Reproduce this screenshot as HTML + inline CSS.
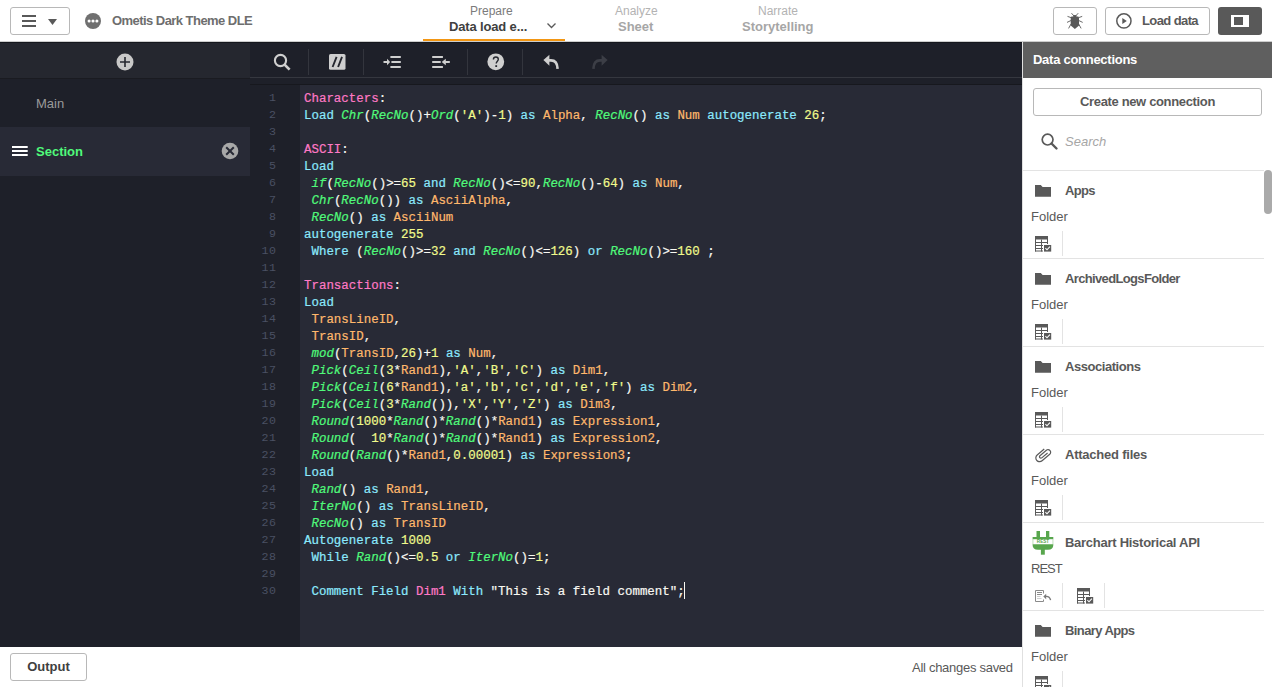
<!DOCTYPE html>
<html><head><meta charset="utf-8">
<style>
*{box-sizing:border-box;margin:0;padding:0}
html,body{width:1272px;height:687px;overflow:hidden;background:#fff;font-family:"Liberation Sans",sans-serif}
.a{position:absolute}
svg{position:absolute;overflow:visible}
#hdr{left:0;top:0;width:1272px;height:42px;background:#fff;border-bottom:1px solid #cdcdcd}
.btn{position:absolute;border:1px solid #b8b8b8;border-radius:3px;background:#fff}
.t{position:absolute;white-space:nowrap;line-height:1}
#left{left:0;top:42px;width:250px;height:605px;background:#1e2029}
#lefthdr{left:0;top:42px;width:250px;height:37px;background:#25272f;border-bottom:1px solid #1a1b21}
#secrow{left:0;top:127px;width:250px;height:49px;background:#282a36}
#toolbar{left:250px;top:42px;width:772px;height:36px;background:#1e2029;border-bottom:1px solid #35373f}
.sep{position:absolute;top:49px;width:1px;height:26px;background:#33353d}
#gap{left:250px;top:78px;width:772px;height:7px;background:#1e2029;border-bottom:1px solid #17181e}
#gutter{left:250px;top:85px;width:50px;height:562px;background:#1e2029}
#code{left:300px;top:85px;width:722px;height:562px;background:#282a36}
#lns{position:absolute;left:250px;top:89px;width:26.5px;text-align:right;font-family:"Liberation Mono",monospace;font-size:11.6px;letter-spacing:0.5px;line-height:17px;color:#4a5063;white-space:pre}
pre{position:absolute;left:304px;top:91px;font-family:"Liberation Mono",monospace;font-size:12.45px;line-height:17px;color:#f8f8f2;-webkit-text-stroke:0.2px currentColor}
.k{color:#8be9fd}.f{color:#50fa7b;font-style:italic}.v{color:#ffb86c}.n{color:#f1fa8c}.l{color:#ff79c6}.s{color:#f1fa8c}
#caret{left:684px;top:582px;width:1px;height:17px;background:#f8f8f2}
#right{left:1022px;top:42px;width:250px;height:645px;background:#fff;border-left:1px solid #e0e0e0;overflow:hidden}
#rhdr{left:1023px;top:42px;width:249px;height:36px;background:#5f5f5f}
#foot{left:0;top:647px;width:1022px;height:40px;background:#fff}
.item{position:absolute;left:1023px;width:241px;height:88px;border-bottom:1px solid #e3e3e3}
.nm{position:absolute;left:42px;top:12px;font-size:13px;font-weight:bold;color:#595959;white-space:nowrap}
.ty{position:absolute;left:8px;top:38px;font-size:13px;color:#595959}
.vs{position:absolute;top:60px;width:1px;height:25px;background:#e3e3e3}
</style></head><body>
<div id="hdr" class="a"></div>
<div class="btn" style="left:10px;top:7px;width:60px;height:28px"></div>
<svg style="left:22px;top:15px" width="14" height="12"><rect x="0" y="0" width="14" height="2" fill="#595959"/><rect x="0" y="5" width="14" height="2" fill="#595959"/><rect x="0" y="10" width="14" height="2" fill="#595959"/></svg>
<svg style="left:48px;top:19px" width="9" height="6"><path d="M0 0H9L4.5 6Z" fill="#595959"/></svg>
<svg style="left:85px;top:13px" width="16" height="16"><circle cx="8" cy="8" r="8" fill="#707070"/><circle cx="4.1" cy="8" r="1.55" fill="#fff"/><circle cx="8" cy="8" r="1.55" fill="#fff"/><circle cx="11.9" cy="8" r="1.55" fill="#fff"/></svg>
<div class="t" style="left:112px;top:14px;font-size:13px;font-weight:bold;color:#6e6e6e;letter-spacing:-0.55px">Ometis Dark Theme DLE</div>

<div class="t" style="left:470px;top:5px;font-size:12px;color:#7b7b7b">Prepare</div>
<div class="t" style="left:449px;top:20px;font-size:13px;font-weight:bold;color:#404040;letter-spacing:-0.15px">Data load e...</div>
<svg style="left:547px;top:23px" width="9" height="5"><path d="M0.5 0.5L4.5 4.5L8.5 0.5" stroke="#595959" stroke-width="1.3" fill="none"/></svg>
<div class="a" style="left:423px;top:39px;width:142px;height:2px;background:#f29613"></div>
<div class="t" style="left:615px;top:5px;font-size:12px;color:#b3b3b3">Analyze</div>
<div class="t" style="left:618px;top:20px;font-size:13px;font-weight:bold;color:#a6a6a6">Sheet</div>
<div class="t" style="left:758px;top:5px;font-size:12px;color:#b3b3b3">Narrate</div>
<div class="t" style="left:742px;top:20px;font-size:13px;font-weight:bold;color:#a6a6a6">Storytelling</div>

<div class="btn" style="left:1053px;top:7px;width:44px;height:28px"></div>
<svg style="left:1062px;top:10px" width="26" height="22"><path d="M8.7 7.6Q8.7 6.6 10 6.6H15.7Q17 6.6 17 7.6V15.4L12.85 19L8.7 15.4Z" fill="#595959"/><ellipse cx="12.85" cy="6.2" rx="1.7" ry="1.1" fill="#595959"/><path d="M12 6L9.5 3.2M13.7 6L16.2 3.2M9 7.6L5.5 6.4M16.7 7.6L20.2 6.4M9 10.5L5 12.4M16.7 10.5L20.7 12.4M9 14L6.6 18.4M16.7 14L19.1 18.4" stroke="#595959" stroke-width="0.9" fill="none"/></svg>
<div class="btn" style="left:1105px;top:7px;width:105px;height:28px"></div>
<svg style="left:1116px;top:13px" width="16" height="16"><circle cx="7.9" cy="7.9" r="7.1" stroke="#595959" stroke-width="1.5" fill="none"/><path d="M6.3 5V11L10.8 8Z" fill="#595959"/></svg>
<div class="t" style="left:1142px;top:14px;font-size:13px;font-weight:bold;color:#595959;letter-spacing:-0.6px">Load data</div>
<div class="a" style="left:1218px;top:7px;width:44px;height:28px;background:#595959;border-radius:3px"></div>
<div class="a" style="left:1231px;top:15px;width:18px;height:12px;background:#fff"></div><div class="a" style="left:1234px;top:17px;width:9px;height:8px;background:#595959"></div>

<div id="left" class="a"></div>
<div id="lefthdr" class="a"></div>
<svg style="left:116px;top:53px" width="18" height="18"><circle cx="9" cy="9" r="8.5" fill="#c8c8c8"/><path d="M9 4V14M4 9H14" stroke="#25272f" stroke-width="1.6"/></svg>
<div class="t" style="left:36px;top:97px;font-size:13px;color:#9a9a9a">Main</div>
<div id="secrow" class="a"></div>
<svg style="left:12px;top:146px" width="16" height="10"><rect y="0" width="15.7" height="2" fill="#fff"/><rect y="4" width="15.7" height="2" fill="#fff"/><rect y="8" width="15.7" height="2" fill="#fff"/></svg>
<div class="t" style="left:36px;top:145px;font-size:13px;font-weight:bold;color:#50fa7b">Section</div>
<svg style="left:221px;top:142px" width="18" height="18"><circle cx="9" cy="9" r="8.3" fill="#a8a8a8"/><path d="M5.2 5.2L12.8 12.8M12.8 5.2L5.2 12.8" stroke="#282a36" stroke-width="2"/></svg>

<div id="toolbar" class="a"></div>
<svg style="left:273px;top:53px" width="18" height="18"><circle cx="7.5" cy="7.5" r="5.6" stroke="#cfcfcf" stroke-width="2.1" fill="none"/><path d="M11.6 11.6L16.6 16.6" stroke="#cfcfcf" stroke-width="2.7"/></svg>
<div class="sep" style="left:308px"></div>
<svg style="left:329px;top:54px" width="17" height="16"><rect x="0" y="0" width="16.5" height="15.8" rx="1.6" fill="#cfcfcf"/><path d="M7.6 2.9L3.6 13M13 2.9L9.1 13" stroke="#25272f" stroke-width="1.9"/></svg>
<div class="sep" style="left:363px"></div>
<svg style="left:383px;top:55px" width="18" height="14"><rect x="7.4" y="1" width="10.4" height="2" fill="#cfcfcf"/><rect x="8.4" y="6" width="9.4" height="2" fill="#cfcfcf"/><rect x="7.4" y="11" width="10.4" height="2" fill="#cfcfcf"/><rect x="0.5" y="6" width="4.5" height="2" fill="#cfcfcf"/><path d="M4 3.8L7.2 7L4 10.2Z" fill="#cfcfcf"/></svg>
<svg style="left:432px;top:55px" width="18" height="14"><rect x="0.2" y="1" width="10.7" height="2" fill="#cfcfcf"/><rect x="0.2" y="6" width="8.5" height="2" fill="#cfcfcf"/><rect x="0.2" y="11" width="10.7" height="2" fill="#cfcfcf"/><rect x="13" y="6" width="4.8" height="2" fill="#cfcfcf"/><path d="M13.8 3.8L9.7 7L13.8 10.2Z" fill="#cfcfcf"/></svg>
<div class="sep" style="left:467px"></div>
<svg style="left:487px;top:53px" width="18" height="18"><circle cx="8.8" cy="8.8" r="8.4" fill="#cfcfcf"/><path d="M6.4 6.6C6.4 4.8 7.5 4 8.9 4C10.4 4 11.3 5 11.3 6.3C11.3 8.1 9.2 8.3 9.2 10.6" stroke="#25272f" stroke-width="1.4" fill="none"/><rect x="8.3" y="12.2" width="1.8" height="1.8" fill="#25272f"/></svg>
<div class="sep" style="left:522px"></div>
<svg style="left:543px;top:54px" width="17" height="16"><path d="M0.4 6L6.4 0.7V11.8Z" fill="#cfcfcf"/><path d="M6 6.4H8C12 6.4 14.4 9 14.6 14.9" stroke="#cfcfcf" stroke-width="2.6" fill="none"/></svg>
<svg style="left:592px;top:54px" width="17" height="16"><path d="M15.6 6L9.6 0.7V11.8Z" fill="#3c3e46"/><path d="M10 6.4H8C4 6.4 1.6 9 1.4 14.9" stroke="#3c3e46" stroke-width="2.6" fill="none"/></svg>

<div id="gap" class="a"></div>
<div class="a" style="left:0;top:42px;width:1022px;height:1px;background:#15171d"></div>
<div id="gutter" class="a"></div>
<div id="code" class="a"></div>
<div id="lns">1
2
3
4
5
6
7
8
9
10
11
12
13
14
15
16
17
18
19
20
21
22
23
24
25
26
27
28
29
30</div>
<pre id="src"><span class="l">Characters</span>:
<span class="k">Load</span> <span class="f">Chr</span>(<span class="f">RecNo</span>()+<span class="f">Ord</span>(<span class="s">'A'</span>)-<span class="n">1</span>) <span class="k">as</span> <span class="v">Alpha</span>, <span class="f">RecNo</span>() <span class="k">as</span> <span class="v">Num</span> <span class="k">autogenerate</span> <span class="n">26</span>;

<span class="l">ASCII</span>:
<span class="k">Load</span>
 <span class="f">if</span>(<span class="f">RecNo</span>()&gt;=<span class="n">65</span> <span class="k">and</span> <span class="f">RecNo</span>()&lt;=<span class="n">90</span>,<span class="f">RecNo</span>()-<span class="n">64</span>) <span class="k">as</span> <span class="v">Num</span>,
 <span class="f">Chr</span>(<span class="f">RecNo</span>()) <span class="k">as</span> <span class="v">AsciiAlpha</span>,
 <span class="f">RecNo</span>() <span class="k">as</span> <span class="v">AsciiNum</span>
<span class="k">autogenerate</span> <span class="n">255</span>
 <span class="k">Where</span> (<span class="f">RecNo</span>()&gt;=<span class="n">32</span> <span class="k">and</span> <span class="f">RecNo</span>()&lt;=<span class="n">126</span>) <span class="k">or</span> <span class="f">RecNo</span>()&gt;=<span class="n">160</span> ;

<span class="l">Transactions</span>:
<span class="k">Load</span>
 <span class="v">TransLineID</span>,
 <span class="v">TransID</span>,
 <span class="f">mod</span>(<span class="v">TransID</span>,<span class="n">26</span>)+<span class="n">1</span> <span class="k">as</span> <span class="v">Num</span>,
 <span class="f">Pick</span>(<span class="f">Ceil</span>(<span class="n">3</span>*<span class="v">Rand1</span>),<span class="s">'A'</span>,<span class="s">'B'</span>,<span class="s">'C'</span>) <span class="k">as</span> <span class="v">Dim1</span>,
 <span class="f">Pick</span>(<span class="f">Ceil</span>(<span class="n">6</span>*<span class="v">Rand1</span>),<span class="s">'a'</span>,<span class="s">'b'</span>,<span class="s">'c'</span>,<span class="s">'d'</span>,<span class="s">'e'</span>,<span class="s">'f'</span>) <span class="k">as</span> <span class="v">Dim2</span>,
 <span class="f">Pick</span>(<span class="f">Ceil</span>(<span class="n">3</span>*<span class="f">Rand</span>()),<span class="s">'X'</span>,<span class="s">'Y'</span>,<span class="s">'Z'</span>) <span class="k">as</span> <span class="v">Dim3</span>,
 <span class="f">Round</span>(<span class="n">1000</span>*<span class="f">Rand</span>()*<span class="f">Rand</span>()*<span class="v">Rand1</span>) <span class="k">as</span> <span class="v">Expression1</span>,
 <span class="f">Round</span>(  <span class="n">10</span>*<span class="f">Rand</span>()*<span class="f">Rand</span>()*<span class="v">Rand1</span>) <span class="k">as</span> <span class="v">Expression2</span>,
 <span class="f">Round</span>(<span class="f">Rand</span>()*<span class="v">Rand1</span>,<span class="n">0.00001</span>) <span class="k">as</span> <span class="v">Expression3</span>;
<span class="k">Load</span>
 <span class="f">Rand</span>() <span class="k">as</span> <span class="v">Rand1</span>,
 <span class="f">IterNo</span>() <span class="k">as</span> <span class="v">TransLineID</span>,
 <span class="f">RecNo</span>() <span class="k">as</span> <span class="v">TransID</span>
<span class="k">Autogenerate</span> <span class="n">1000</span>
 <span class="k">While</span> <span class="f">Rand</span>()&lt;=<span class="n">0.5</span> <span class="k">or</span> <span class="f">IterNo</span>()=<span class="n">1</span>;

 <span class="k">Comment Field</span> <span class="l">Dim1</span> <span class="k">With</span> "This is a field comment";</pre>
<div id="caret" class="a"></div>

<div id="right" class="a"></div>
<div id="rhdr" class="a"></div>
<div class="t" style="left:1033px;top:53px;font-size:13px;font-weight:bold;color:#fff;letter-spacing:-0.27px">Data connections</div>
<div class="btn" style="left:1033px;top:88px;width:229px;height:28px"></div>
<div class="t" style="left:1033px;top:95px;width:229px;text-align:center;font-size:13px;font-weight:bold;color:#595959;letter-spacing:-0.35px">Create new connection</div>
<svg style="left:1041px;top:133px" width="17" height="17"><circle cx="6.6" cy="6.6" r="5.4" stroke="#595959" stroke-width="1.7" fill="none"/><path d="M10.5 10.5L15.5 15.5" stroke="#595959" stroke-width="2.4" stroke-linecap="round"/></svg>
<div class="t" style="left:1065px;top:135px;font-size:13px;font-style:italic;color:#a6a6a6">Search</div>
<div class="a" style="left:1023px;top:170px;width:241px;height:1px;background:#e3e3e3"></div>
<div class="a" style="left:1264px;top:170px;width:8px;height:44px;border-radius:4px;background:#aaaaaa"></div>
<div class="item" style="top:171px"><svg style="left:12px;top:14px" width="16" height="12"><path d="M0 0H5.8L7.6 2H16V11.8H0Z" fill="#595959"/></svg><div class="nm" style="letter-spacing:-0.67px">Apps</div><div class="ty">Folder</div><svg style="left:12px;top:65px" width="17" height="16"><rect x="0" y="0" width="13" height="3.5" fill="#595959"/><path d="M0.5 0V15.5M6.5 3.5V15.5M12.5 0V8M0 6.5H12.5M0 9.5H8M0 12.5H8M0 15H8" stroke="#595959" stroke-width="1" fill="none"/><rect x="9" y="9" width="7.2" height="6.6" fill="#595959"/><path d="M10.4 12.2L12 13.8L14.9 10.7" stroke="#fff" stroke-width="1.1" fill="none"/></svg><div class="vs" style="left:39px"></div></div>
<div class="item" style="top:259px"><svg style="left:12px;top:14px" width="16" height="12"><path d="M0 0H5.8L7.6 2H16V11.8H0Z" fill="#595959"/></svg><div class="nm" style="letter-spacing:-0.65px">ArchivedLogsFolder</div><div class="ty">Folder</div><svg style="left:12px;top:65px" width="17" height="16"><rect x="0" y="0" width="13" height="3.5" fill="#595959"/><path d="M0.5 0V15.5M6.5 3.5V15.5M12.5 0V8M0 6.5H12.5M0 9.5H8M0 12.5H8M0 15H8" stroke="#595959" stroke-width="1" fill="none"/><rect x="9" y="9" width="7.2" height="6.6" fill="#595959"/><path d="M10.4 12.2L12 13.8L14.9 10.7" stroke="#fff" stroke-width="1.1" fill="none"/></svg><div class="vs" style="left:39px"></div></div>
<div class="item" style="top:347px"><svg style="left:12px;top:14px" width="16" height="12"><path d="M0 0H5.8L7.6 2H16V11.8H0Z" fill="#595959"/></svg><div class="nm" style="letter-spacing:-0.45px">Associations</div><div class="ty">Folder</div><svg style="left:12px;top:65px" width="17" height="16"><rect x="0" y="0" width="13" height="3.5" fill="#595959"/><path d="M0.5 0V15.5M6.5 3.5V15.5M12.5 0V8M0 6.5H12.5M0 9.5H8M0 12.5H8M0 15H8" stroke="#595959" stroke-width="1" fill="none"/><rect x="9" y="9" width="7.2" height="6.6" fill="#595959"/><path d="M10.4 12.2L12 13.8L14.9 10.7" stroke="#fff" stroke-width="1.1" fill="none"/></svg><div class="vs" style="left:39px"></div></div>
<div class="item" style="top:435px"><svg style="left:8px;top:8px" width="24" height="24" viewBox="0 0 24 24"><g transform="translate(12 12) rotate(50) scale(-0.8 0.8) translate(-12.5 -12)"><path d="M16.5 6v11.5c0 2.21-1.79 4-4 4s-4-1.79-4-4V5c0-1.38 1.12-2.5 2.5-2.5s2.5 1.12 2.5 2.5v10.5c0 .55-.45 1-1 1s-1-.45-1-1V6H10v9.5c0 1.38 1.12 2.5 2.5 2.5s2.5-1.12 2.5-2.5V5c0-2.21-1.79-4-4-4S7 2.79 7 5v12.5c0 3.04 2.46 5.5 5.5 5.5s5.5-2.46 5.5-5.5V6h-1.5z" fill="#595959"/></g></svg><div class="nm" style="letter-spacing:-0.23px">Attached files</div><div class="ty">Folder</div><svg style="left:12px;top:65px" width="17" height="16"><rect x="0" y="0" width="13" height="3.5" fill="#595959"/><path d="M0.5 0V15.5M6.5 3.5V15.5M12.5 0V8M0 6.5H12.5M0 9.5H8M0 12.5H8M0 15H8" stroke="#595959" stroke-width="1" fill="none"/><rect x="9" y="9" width="7.2" height="6.6" fill="#595959"/><path d="M10.4 12.2L12 13.8L14.9 10.7" stroke="#fff" stroke-width="1.1" fill="none"/></svg><div class="vs" style="left:39px"></div></div>
<div class="item" style="top:523px"><svg style="left:9px;top:8px" width="22" height="24"><rect x="4.5" y="0" width="3.5" height="6.5" fill="#58a64d"/><rect x="14" y="0" width="3.3" height="6.5" fill="#58a64d"/><rect x="0.6" y="6" width="20.7" height="2.2" fill="#58a64d"/><rect x="0.6" y="8" width="0.7" height="5.3" fill="#a9d3a4"/><rect x="20.6" y="8" width="0.7" height="5.3" fill="#a9d3a4"/><path d="M0.6 13.2H21.3V14Q21.3 18.7 16 18.7H6Q0.6 18.7 0.6 14Z" fill="#58a64d"/><rect x="8.9" y="18" width="3.9" height="5.7" fill="#58a64d"/><text x="11" y="12.3" font-size="4.6" font-weight="bold" text-anchor="middle" fill="#58a64d" font-family="Liberation Sans">REST</text></svg><div class="nm" style="letter-spacing:-0.27px">Barchart Historical API</div><div class="ty" style="letter-spacing:-1px">REST</div><svg style="left:12px;top:67px" width="17" height="13"><path d="M0.5 0.5H8.5V3.5M0.5 0.5V11.5H8.5V9.5" stroke="#8a8a8a" stroke-width="1" fill="none"/><path d="M2 2.5H7M2 4.5H7" stroke="#8a8a8a" stroke-width="1"/><path d="M2 6.5H5.5M2 8.5H6.5" stroke="#cfcfcf" stroke-width="1"/><path d="M8.3 6.5L11.2 3.8V9.2Z" fill="#7a7a7a"/><path d="M10.5 6.4C13 6.1 15 7.6 15.6 10.2" stroke="#7a7a7a" stroke-width="1.4" fill="none"/></svg><div class="vs" style="left:39px"></div><svg style="left:54px;top:65px" width="17" height="16"><rect x="0" y="0" width="13" height="3.5" fill="#595959"/><path d="M0.5 0V15.5M6.5 3.5V15.5M12.5 0V8M0 6.5H12.5M0 9.5H8M0 12.5H8M0 15H8" stroke="#595959" stroke-width="1" fill="none"/><rect x="9" y="9" width="7.2" height="6.6" fill="#595959"/><path d="M10.4 12.2L12 13.8L14.9 10.7" stroke="#fff" stroke-width="1.1" fill="none"/></svg><div class="vs" style="left:81px"></div></div>
<div class="item" style="top:611px"><svg style="left:12px;top:14px" width="16" height="12"><path d="M0 0H5.8L7.6 2H16V11.8H0Z" fill="#595959"/></svg><div class="nm" style="letter-spacing:-0.6px">Binary Apps</div><div class="ty">Folder</div><svg style="left:12px;top:65px" width="17" height="16"><rect x="0" y="0" width="13" height="3.5" fill="#595959"/><path d="M0.5 0V15.5M6.5 3.5V15.5M12.5 0V8M0 6.5H12.5M0 9.5H8M0 12.5H8M0 15H8" stroke="#595959" stroke-width="1" fill="none"/><rect x="9" y="9" width="7.2" height="6.6" fill="#595959"/><path d="M10.4 12.2L12 13.8L14.9 10.7" stroke="#fff" stroke-width="1.1" fill="none"/></svg><div class="vs" style="left:39px"></div></div>
<div id="foot" class="a"></div>
<div class="btn" style="left:10px;top:653px;width:77px;height:28px"></div>
<div class="t" style="left:10px;top:660px;width:77px;text-align:center;font-size:13px;font-weight:bold;color:#404040">Output</div>
<div class="t" style="left:912px;top:661px;font-size:13px;color:#595959;letter-spacing:-0.28px">All changes saved</div>
</body></html>
